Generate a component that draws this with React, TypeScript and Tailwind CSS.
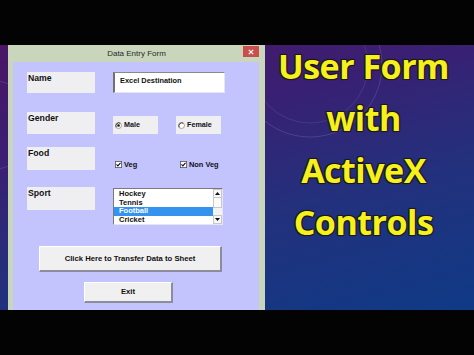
import React from "react";

const ui = { fontFamily: '"Liberation Sans", Arial, sans-serif' };

function Label({ text, h }: { text: string; h: string }) {
  return (
    <div className={`w-[68px] ${h} bg-[#efeff2] px-[1px] pt-[1px] text-[8.7px] font-bold leading-[10px] text-[#111]`}>
      {text}
    </div>
  );
}

function Radio({ checked }: { checked?: boolean }) {
  return (
    <svg width="7" height="7" viewBox="0 0 7 7" className="shrink-0">
      <circle cx="3.5" cy="3.5" r="3" fill="#fff" stroke="#8a8a8a" strokeWidth="0.8" />
      <path d="M1.2 5.2 A3 3 0 0 1 5.2 1.2" fill="none" stroke="#333" strokeWidth="0.9" />
      {checked && <circle cx="3.5" cy="3.5" r="1.3" fill="#111" />}
    </svg>
  );
}

function Check() {
  return (
    <svg width="7" height="7" viewBox="0 0 7 7" className="shrink-0">
      <rect x="0.4" y="0.4" width="6.2" height="6.2" fill="#fff" stroke="#555" strokeWidth="0.8" />
      <path d="M1.5 3.4 L2.9 4.9 L5.5 1.8" fill="none" stroke="#111" strokeWidth="1.1" />
    </svg>
  );
}

export default function App() {
  const sports = ["Hockey", "Tennis", "Football", "Cricket"];

  return (
    <div className="flex h-[355px] w-[474px] flex-col bg-black">
      <div className="h-[45px] shrink-0 bg-[#030303]" />

      <div className="relative flex h-[265px] shrink-0 bg-[linear-gradient(165deg,#4a1665_0%,#3a1f73_30%,#24307c_60%,#0f3a86_100%)]">
        {/* faint decorative rings */}
        <div className="pointer-events-none absolute inset-0 overflow-hidden">
          <svg className="absolute left-[230px] top-[-60px]" width="160" height="160" viewBox="0 0 160 160">
            <circle cx="80" cy="80" r="72" fill="none" stroke="#8a6aa8" strokeOpacity="0.35" strokeWidth="1" />
            <circle cx="80" cy="80" r="58" fill="none" stroke="#8a6aa8" strokeOpacity="0.25" strokeWidth="1" />
          </svg>
          <svg className="absolute left-[-40px] top-[20px]" width="80" height="120" viewBox="0 0 80 120">
            <circle cx="30" cy="60" r="45" fill="none" stroke="#8a6aa8" strokeOpacity="0.3" strokeWidth="1" />
          </svg>
        </div>

        {/* dialog */}
        <div className="relative ml-[8px] flex w-[257px] shrink-0 flex-col bg-[#c9d6bc]" style={ui}>
          <div className="relative flex h-[17px] shrink-0 items-center justify-center">
            <span className="text-[8px] text-[#2a2a2a]">Data Entry Form</span>
            <div className="absolute right-[6px] top-[1px] flex h-[11px] w-[16px] items-center justify-center bg-[#c94f4f]">
              <svg width="6" height="6" viewBox="0 0 6 6">
                <path d="M0.8 0.8 L5.2 5.2 M5.2 0.8 L0.8 5.2" stroke="#fff" strokeWidth="1.2" />
              </svg>
            </div>
          </div>

          <div className="ml-[5px] mr-[6px] flex flex-1 flex-col bg-[#c3c3fd] pl-[14px] pt-[10px]">
            {/* Name */}
            <div className="flex gap-[18px]">
              <Label text="Name" h="h-[21px]" />
              <div className="h-[21px] w-[112px] border-b border-l-2 border-r border-t border-b-[#e6e6f0] border-l-[#707070] border-r-[#e6e6f0] border-t-[#8a8a8a] bg-white pl-[5px] pt-[3px] text-[7.4px] font-bold leading-[9px] text-[#111]">
                Excel Destination
              </div>
            </div>

            {/* Gender */}
            <div className="mt-[19px] flex gap-[18px]">
              <Label text="Gender" h="h-[22px]" />
              <div className="flex gap-[18px] pt-[4px]">
                <div className="flex h-[18px] w-[45px] items-center gap-[2px] bg-[#efeff2] pl-[2px] text-[7.2px] font-bold text-[#111]">
                  <Radio checked />
                  <span>Male</span>
                </div>
                <div className="flex h-[18px] w-[45px] items-center gap-[2px] bg-[#efeff2] pl-[2px] text-[7.2px] font-bold text-[#111]">
                  <Radio />
                  <span>Female</span>
                </div>
              </div>
            </div>

            {/* Food */}
            <div className="mt-[13px] flex gap-[18px]">
              <Label text="Food" h="h-[23px]" />
              <div className="flex pt-[12px] text-[7.4px] font-bold leading-[8px] text-[#111]">
                <div className="ml-[2px] flex w-[65px] items-center gap-[2px]">
                  <Check />
                  <span>Veg</span>
                </div>
                <div className="flex items-center gap-[2px]">
                  <Check />
                  <span>Non Veg</span>
                </div>
              </div>
            </div>

            {/* Sport */}
            <div className="mt-[17px] flex gap-[18px]">
              <Label text="Sport" h="h-[23px]" />
              <div className="mt-[1px] flex h-[37px] w-[110px] border-b border-l border-r border-t border-b-[#e6e6f0] border-l-[#7a7a7a] border-r-[#e6e6f0] border-t-[#7a7a7a] bg-white">
                <div className="flex flex-1 flex-col pt-[1px] text-[7.5px] font-bold leading-[8.7px]">
                  {sports.map((s) => (
                    <div
                      key={s}
                      className={
                        s === "Football"
                          ? "h-[8.7px] bg-[#3393ee] pl-[5px] text-white"
                          : "h-[8.7px] pl-[5px] text-[#111]"
                      }
                    >
                      {s}
                    </div>
                  ))}
                </div>
                <div className="flex w-[9px] flex-col bg-[#f3f3f3]">
                  <div className="flex h-[9px] items-center justify-center border border-[#c8c8c8] bg-[#f7f7f7]">
                    <svg width="5" height="3" viewBox="0 0 5 3">
                      <path d="M0 3 L2.5 0 L5 3 Z" fill="#111" />
                    </svg>
                  </div>
                  <div className="h-[10px] border-x border-b border-[#c8c8c8] bg-[#fafafa]" />
                  <div className="flex-1" />
                  <div className="flex h-[9px] items-center justify-center border border-[#c8c8c8] bg-[#f7f7f7]">
                    <svg width="5" height="3" viewBox="0 0 5 3">
                      <path d="M0 0 L2.5 3 L5 0 Z" fill="#111" />
                    </svg>
                  </div>
                </div>
              </div>
            </div>

            {/* Buttons */}
            <button className="ml-[12px] mt-[21px] flex h-[26px] w-[183px] items-center justify-center border-b-2 border-l border-r-2 border-t border-b-[#8c8c9c] border-l-white border-r-[#8c8c9c] border-t-white bg-[#f0f0f0] text-[7.7px] font-bold text-[#111]">
              Click Here to Transfer Data to Sheet
            </button>
            <button className="ml-[57px] mt-[10px] flex h-[21px] w-[89px] items-center justify-center border-b-2 border-l border-r-2 border-t border-b-[#8c8c9c] border-l-white border-r-[#8c8c9c] border-t-white bg-[#f0f0f0] text-[7.7px] font-bold text-[#111]">
              Exit
            </button>
          </div>
        </div>

        {/* title text */}
        <div
          className="relative -mt-[5px] flex flex-1 flex-col items-center pr-[12px] text-[34px] font-bold leading-[52px] tracking-[-0.5px] text-[#f6f11c] [text-shadow:1px_1px_0_#1a1a1a,-1px_-1px_0_#1a1a1a,1px_-1px_0_#1a1a1a,-1px_1px_0_#1a1a1a,0_0_2px_#000]"
          style={{ fontFamily: '"Open Sans", Lato, sans-serif' }}
        >
          <div>User Form</div>
          <div>with</div>
          <div>ActiveX</div>
          <div>Controls</div>
        </div>
      </div>

      <div className="flex-1 bg-[#030303]" />
    </div>
  );
}
